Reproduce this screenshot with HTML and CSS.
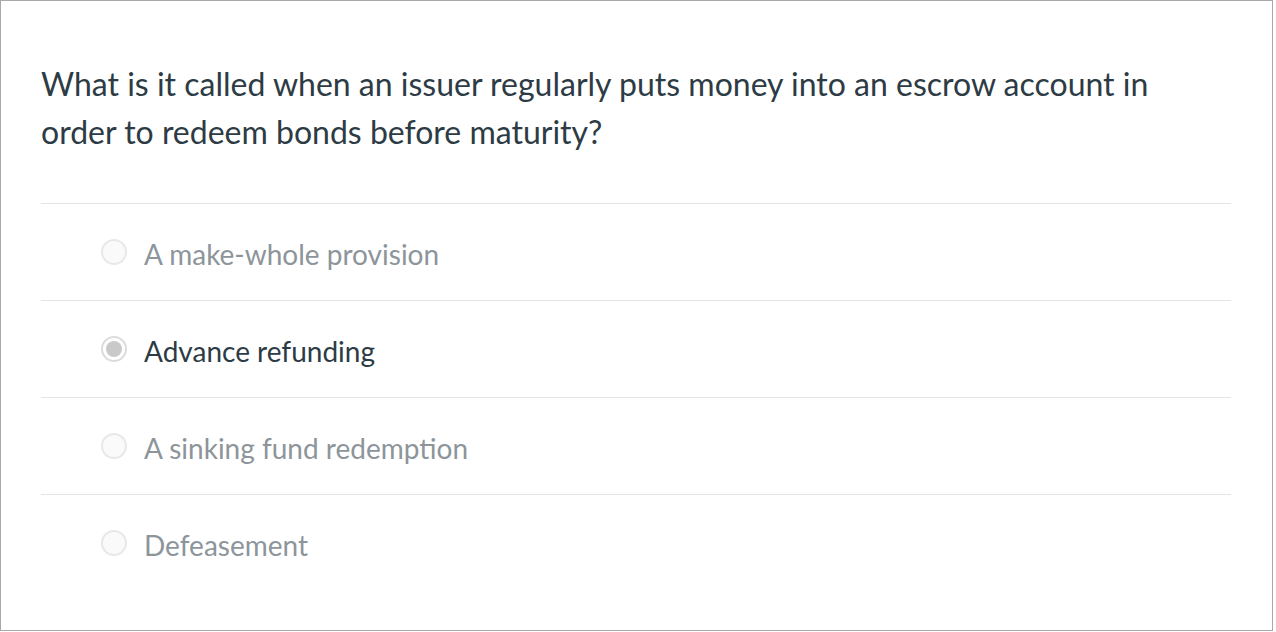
FILE: index.html
```html
<!DOCTYPE html>
<html>
<head>
<meta charset="utf-8">
<link rel="stylesheet" href="styles.css">
</head>
<body>
<div class="quiz">
  <div class="question">What is it called when an issuer regularly puts money into an escrow account in order to redeem bonds before maturity?</div>
  <div class="answers">
    <div class="answer">
      <span class="radio"></span>
      <span class="label">A make-whole provision</span>
    </div>
    <div class="answer selected">
      <span class="radio"></span>
      <span class="label">Advance refunding</span>
    </div>
    <div class="answer">
      <span class="radio"></span>
      <span class="label">A sinking fund redemption</span>
    </div>
    <div class="answer">
      <span class="radio"></span>
      <span class="label">Defeasement</span>
    </div>
  </div>
</div>
</body>
</html>
```
FILE: styles.css
```css
html, body {
  margin: 0;
  padding: 0;
  background: #ffffff;
}
.quiz {
  box-sizing: border-box;
  width: 1273px;
  height: 631px;
  border: 1px solid #a9a9a9;
  padding: 59px 41px 0 40px;
  font-family: Lato, "Open Sans", sans-serif;
  color: #2d3b45;
}
.question {
  font-size: 32px;
  line-height: 48px;
  padding-right: 60px;
  margin-bottom: 47px;
}
.answers {
  display: flex;
  flex-direction: column;
}
.answer {
  display: flex;
  align-items: center;
  gap: 17px;
  height: 96px;
  padding-left: 60px;
  border-top: 1px solid #e2e4e6;
  color: #8d959b;
  font-size: 28px;
}
.label {
  padding-top: 3px;
}
.radio {
  box-sizing: border-box;
  width: 26px;
  height: 26px;
  border-radius: 50%;
  border: 2px solid #e8e8e8;
  background: #fafafa;
  flex: none;
  position: relative;
}
.selected {
  color: #2d3b45;
}
.selected .radio {
  border-color: #dcdcdc;
  background: #fff;
}
.selected .radio::after {
  content: "";
  position: absolute;
  left: 3px;
  top: 3px;
  width: 16px;
  height: 16px;
  border-radius: 50%;
  background: #c9c9c9;
}
```
